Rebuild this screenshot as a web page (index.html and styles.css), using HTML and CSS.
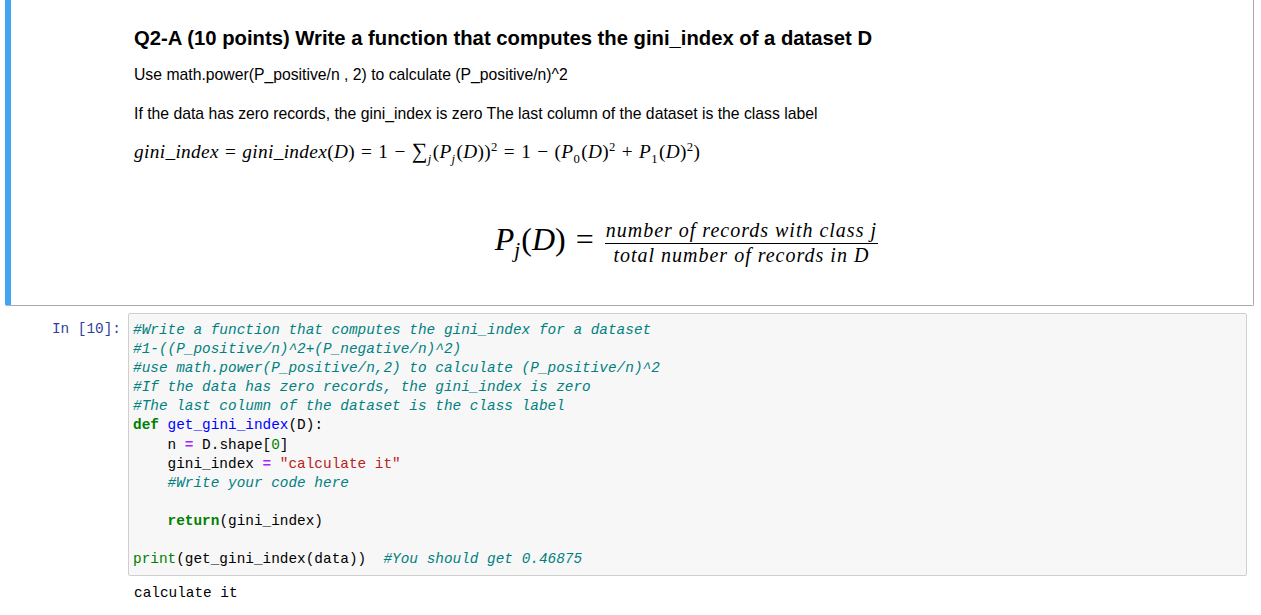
FILE: index.html
```html
<!DOCTYPE html>
<html lang="en">
<head>
<meta charset="utf-8">
<title>Q2-A gini_index</title>
<link rel="stylesheet" href="styles.css">
</head>
<body>
<div class="md-cell">
  <h2 class="title">Q2-A (10 points) Write a function that computes the gini_index of a dataset D</h2>
  <p class="para first">Use math.power(P_positive/n , 2) to calculate (P_positive/n)^2</p>
  <p class="para second">If the data has zero records, the gini_index is zero The last column of the dataset is the class label</p>
  <div class="math inline-math"><i>gini_index</i> = <i>gini_index</i>(<i>D</i>) = 1 &minus; <span class="sum">&sum;</span><sub><i>j</i></sub>(<i>P<sub>j</sub></i>(<i>D</i>))<sup>2</sup> = 1 &minus; (<i>P</i><sub>0</sub>(<i>D</i>)<sup>2</sup> + <i>P</i><sub>1</sub>(<i>D</i>)<sup>2</sup>)</div>
  <div class="math display-math">
    <span class="lhs"><i>P<sub>j</sub></i>(<i>D</i>) =</span>
    <span class="frac">
      <span class="num"><i>number of records with class j</i></span>
      <span class="den"><i>total number of records in D</i></span>
    </span>
  </div>
</div>
<div class="code-row">
  <div class="prompt">In [10]:</div>
  <pre class="input"><span class="c">#Write a function that computes the gini_index for a dataset</span>
<span class="c">#1-((P_positive/n)^2+(P_negative/n)^2)</span>
<span class="c">#use math.power(P_positive/n,2) to calculate (P_positive/n)^2</span>
<span class="c">#If the data has zero records, the gini_index is zero</span>
<span class="c">#The last column of the dataset is the class label</span>
<span class="k">def</span> <span class="f">get_gini_index</span>(D):
    n <span class="o">=</span> D.shape[<span class="n">0</span>]
    gini_index <span class="o">=</span> <span class="s">"calculate it"</span>
    <span class="c">#Write your code here</span>

    <span class="k">return</span>(gini_index)

<span class="b">print</span>(get_gini_index(data))  <span class="c">#You should get 0.46875</span></pre>
</div>
<pre class="output">calculate it</pre>
</body>
</html>
```
FILE: styles.css
```css
html, body {
  margin: 0;
  padding: 0;
  background: #fff;
  overflow: hidden;
}
body {
  width: 1261px;
  height: 615px;
  font-family: "Liberation Sans", Arial, sans-serif;
  color: #000;
}
.md-cell {
  box-sizing: border-box;
  margin-left: 5px;
  width: 1249px;
  height: 306px;
  border: 1px solid #ababab;
  border-top: 0;
  border-left: 6px solid #42a5f5;
  border-radius: 0 0 2px 2px;
  padding: 26px 0 0 123px;
}
.title {
  margin: 0;
  font-size: 20.25px;
  line-height: 24px;
  font-weight: 700;
}
.para {
  margin: 0;
  font-size: 15.75px;
  line-height: 20px;
}
.para.first { margin-top: 15px; }
.para.second { margin-top: 19px; }
.math {
  font-family: "Liberation Serif", "Times New Roman", serif;
}
.math sub, .math sup {
  font-size: 66%;
  line-height: 0;
}
.math sub { margin-right: 1px; }
.inline-math {
  margin-top: 15px;
  font-size: 19.3px;
  line-height: 24px;
  white-space: nowrap;
  word-spacing: 0.9px;
  letter-spacing: 0.35px;
}
.sum { font-size: 22px; }
.display-math {
  margin-top: 50px;
  display: flex;
  justify-content: flex-end;
  align-items: flex-start;
  gap: 11px;
  padding-right: 375px;
}
.lhs {
  margin-top: 5px;
  font-size: 32px;
  line-height: 40px;
  white-space: nowrap;
  word-spacing: 2px;
}
.frac {
  margin-top: 4px;
  display: flex;
  flex-direction: column;
  align-items: center;
  font-size: 20px;
  line-height: 24px;
  letter-spacing: 1px;
  white-space: nowrap;
}
.num {
  border-bottom: 1px solid #000;
  padding: 0 1px 1px;
}
.den { line-height: 23px; }
.code-row {
  display: flex;
  margin-top: 7px;
  margin-left: 5px;
  width: 1242px;
}
.prompt {
  box-sizing: border-box;
  width: 123px;
  padding: 7px 7px 0 0;
  text-align: right;
  color: #303f9f;
  font-family: "Liberation Mono", "DejaVu Sans Mono", monospace;
  font-size: 14.4px;
  line-height: 19.1px;
}
.input {
  box-sizing: border-box;
  flex: 1;
  height: 263px;
  margin: 0;
  padding: 7px 4px 0;
  background: #f7f7f7;
  border: 1px solid #cfcfcf;
  border-radius: 2px;
  font-family: "Liberation Mono", "DejaVu Sans Mono", monospace;
  font-size: 14.4px;
  line-height: 19.1px;
  color: #000;
}
.c { color: #008080; font-style: italic; }
.k { color: #008000; font-weight: 700; }
.f { color: #0000ff; }
.o { color: #aa22ff; font-weight: 700; }
.n { color: #008000; }
.s { color: #ba2121; }
.b { color: #008000; }
.output {
  margin: 8px 0 0 134px;
  font-family: "Liberation Mono", "DejaVu Sans Mono", monospace;
  font-size: 14.4px;
  line-height: 19.1px;
  color: #000;
}
```
